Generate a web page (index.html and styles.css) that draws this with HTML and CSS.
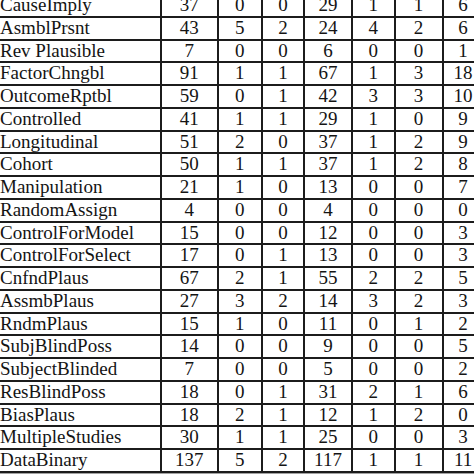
FILE: index.html
```html
<!DOCTYPE html>
<html>
<head>
<meta charset="utf-8">
<link rel="stylesheet" href="styles.css">
</head>
<body>
<div class="frame">
<table class="data">
<colgroup>
<col class="c-name"><col class="c1"><col class="c2"><col class="c3"><col class="c4"><col class="c5"><col class="c6"><col class="c7">
</colgroup>
<tbody>
<tr><td>CauseImply</td><td>37</td><td>0</td><td>0</td><td>29</td><td>1</td><td>1</td><td>6</td></tr>
<tr><td>AsmblPrsnt</td><td>43</td><td>5</td><td>2</td><td>24</td><td>4</td><td>2</td><td>6</td></tr>
<tr><td>Rev Plausible</td><td>7</td><td>0</td><td>0</td><td>6</td><td>0</td><td>0</td><td>1</td></tr>
<tr><td>FactorChngbl</td><td>91</td><td>1</td><td>1</td><td>67</td><td>1</td><td>3</td><td>18</td></tr>
<tr><td>OutcomeRptbl</td><td>59</td><td>0</td><td>1</td><td>42</td><td>3</td><td>3</td><td>10</td></tr>
<tr><td>Controlled</td><td>41</td><td>1</td><td>1</td><td>29</td><td>1</td><td>0</td><td>9</td></tr>
<tr><td>Longitudinal</td><td>51</td><td>2</td><td>0</td><td>37</td><td>1</td><td>2</td><td>9</td></tr>
<tr><td>Cohort</td><td>50</td><td>1</td><td>1</td><td>37</td><td>1</td><td>2</td><td>8</td></tr>
<tr><td>Manipulation</td><td>21</td><td>1</td><td>0</td><td>13</td><td>0</td><td>0</td><td>7</td></tr>
<tr><td>RandomAssign</td><td>4</td><td>0</td><td>0</td><td>4</td><td>0</td><td>0</td><td>0</td></tr>
<tr><td>ControlForModel</td><td>15</td><td>0</td><td>0</td><td>12</td><td>0</td><td>0</td><td>3</td></tr>
<tr><td>ControlForSelect</td><td>17</td><td>0</td><td>1</td><td>13</td><td>0</td><td>0</td><td>3</td></tr>
<tr><td>CnfndPlaus</td><td>67</td><td>2</td><td>1</td><td>55</td><td>2</td><td>2</td><td>5</td></tr>
<tr><td>AssmbPlaus</td><td>27</td><td>3</td><td>2</td><td>14</td><td>3</td><td>2</td><td>3</td></tr>
<tr><td>RndmPlaus</td><td>15</td><td>1</td><td>0</td><td>11</td><td>0</td><td>1</td><td>2</td></tr>
<tr><td>SubjBlindPoss</td><td>14</td><td>0</td><td>0</td><td>9</td><td>0</td><td>0</td><td>5</td></tr>
<tr><td>SubjectBlinded</td><td>7</td><td>0</td><td>0</td><td>5</td><td>0</td><td>0</td><td>2</td></tr>
<tr><td>ResBlindPoss</td><td>18</td><td>0</td><td>1</td><td>31</td><td>2</td><td>1</td><td>6</td></tr>
<tr><td>BiasPlaus</td><td>18</td><td>2</td><td>1</td><td>12</td><td>1</td><td>2</td><td>0</td></tr>
<tr><td>MultipleStudies</td><td>30</td><td>1</td><td>1</td><td>25</td><td>0</td><td>0</td><td>3</td></tr>
<tr><td>DataBinary</td><td>137</td><td>5</td><td>2</td><td>117</td><td>1</td><td>1</td><td>11</td></tr>
</tbody>
</table>
</div>
</body>
</html>
```
FILE: styles.css
```css
html, body {
  margin: 0;
  padding: 0;
  background: #a2a2a2;
  overflow: hidden;
}
.frame {
  width: 474px;
  height: 474px;
  overflow: hidden;
  background: #a2a2a2;
}
.data {
  border-collapse: collapse;
  table-layout: fixed;
  width: 486.5px;
  margin-top: -7px;
  margin-left: -4px;
  background: #fff;
  font-family: "Liberation Serif", "Times New Roman", serif;
  font-size: 19px;
  color: #141414;
}
.c-name { width: 164px; }
.c1 { width: 56.5px; }
.c2 { width: 44.5px; }
.c3 { width: 42px; }
.c4 { width: 48px; }
.c5 { width: 42.5px; }
.c6 { width: 48.2px; }
.c7 { width: 40.8px; }
.data td {
  border: 2px solid #1c1c1c;
  padding: 0;
  height: 20.75px;
  line-height: 20.75px;
  text-align: center;
  white-space: nowrap;
  overflow: hidden;
}
.data td:first-child {
  text-align: left;
  padding-left: 2px;
}
```
